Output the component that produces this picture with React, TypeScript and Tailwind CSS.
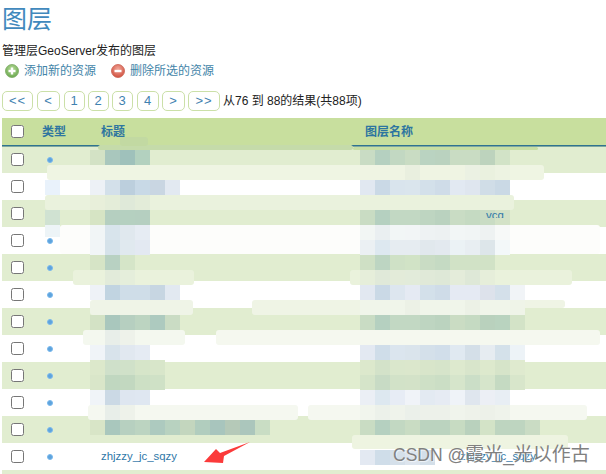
const rowCount = 13

type Mosaic = { x: number; y: number; colors: string[] }
type Band = { x: number; y: number; w: number; h: number; color: string }

const titleMosaic: Mosaic[] = [
  { x: 90, y: 150, colors: ['#d3e2c5', '#a9c7bd', '#9fc1bb', '#b3d1bf'] },
  { x: 90, y: 180, colors: ['#edf1f6', '#d3e0ea', '#bccfdd', '#c8d9e6', '#c9d6e2', '#e2e9f1'] },
  { x: 90, y: 195, colors: ['#e8efda', '#e4edd9', '#dfe9d9', '#e3ecd9'] },
  { x: 90, y: 210, colors: ['#d6e4c4', '#b5cfc0', '#b5d0c0', '#b5cfc0'] },
  { x: 90, y: 225, colors: ['#f1f5f6', '#d8e4ec', '#e0e8ee', '#e6ecf3'] },
  { x: 90, y: 240, colors: ['#f1f5f7', '#d5e2ea', '#e0e9ef', '#e3e9f2'] },
  { x: 90, y: 255, colors: ['#d6e4c6', '#b8d1c2', '#d5e5c8'] },
  { x: 105, y: 270, colors: ['#e2ebda', '#e5eedb'] },
  { x: 90, y: 285, colors: ['#eef2f7', '#c1d4e1', '#cfdde8', '#cfdde8', '#c7d6e2', '#e2e9f1'] },
  { x: 90, y: 315, colors: ['#d3e2c5', '#a9c7bd', '#b6cfc0', '#bcd4c1', '#adcabf', '#cadcc4'] },
  { x: 105, y: 330, colors: ['#e8eee9', '#eef2ea'] },
  { x: 90, y: 345, colors: ['#f0f4f8', '#d8e3eb', '#e1e8f0', '#e5ebf3'] },
  { x: 90, y: 360, colors: ['#dce8cb', '#cfe0ca', '#d0e1c9', '#d6e5c9', '#d8e6ca'] },
  { x: 90, y: 375, colors: ['#d9e6c9', '#c0d7c0', '#c2d8c0', '#cde0c5', '#cfe1c6'] },
  { x: 90, y: 390, colors: ['#f0f4f8', '#cbd9e5', '#dee6f0', '#dfe7f1'] },
  { x: 105, y: 405, colors: ['#e8eee9', '#eef2ea'] },
  {
    x: 90,
    y: 420,
    colors: ['#d8e5c7', '#a9c7bd', '#b7d0c0', '#bcd4c1', '#adcabf', '#b8d2c0', '#c3d6be', '#b1cdbe', '#a8c5bd', '#b5c9b8', '#abc6bc', '#c9ddc4'],
  },
  { x: 45, y: 180, colors: ['#e9f2fb'] },
  { x: 45, y: 210, colors: ['#d0e2d2'] },
]

const nameMosaic: Mosaic[] = [
  { x: 360, y: 150, colors: ['#c9dcc4', '#b5d0c0', '#c2d8c2', '#c9dcc3', '#bad3c1', '#bad2bf', '#c9dcc3', '#c9dcc3', '#bdd3bd', '#d2e3c7'] },
  { x: 360, y: 165, colors: ['#eff4e3', '#eff4e3', '#eff4e3', '#e9efdf', '#eff4e3', '#eff4e3', '#eff4e3', '#ebf1e3', '#eaf1df', '#edf3e2'] },
  { x: 360, y: 180, colors: ['#e1e8f1', '#cad9e6', '#d9e4ed', '#dae5ed', '#d3e0ea', '#cfdce8', '#e2e9f2', '#dfe6ef', '#d0dde7', '#cad9e5'] },
  { x: 360, y: 210, colors: ['#c9dcc3', '#b5d0c0', '#c2d8c3', '#c2d8c3', '#bed5c1', '#bad2bf', '#c9dcc4', '#c5dac2', '#c9dcc4', '#d3e2c7'] },
  { x: 360, y: 225, colors: ['#f2f6f4', '#eaeff1', '#f2f6f6', '#f2f5f6', '#eef2f3', '#edf1f2', '#f2f6f6', '#f1f5f5', '#eef2f2', '#f7f9f8'] },
  { x: 360, y: 240, colors: ['#ebf0f3', '#dde8f0', '#e6ecf1', '#e6ecf1', '#e1e8ed', '#e3e9ef', '#ebf2f5', '#e8eef2', '#dde6ea', '#f3f8f9'] },
  { x: 360, y: 255, colors: ['#cfe0c5', '#bdd5c2', '#cfe1c6', '#d1e3c6', '#c9dcc4', '#c5dac3', '#d1e2c6', '#d1e2c6', '#d1e2c6'] },
  { x: 360, y: 270, colors: ['#e6eeda', '#e0e9d9', '#e3ebd9', '#e2ebda', '#e0e9d8', '#dee8d7', '#e4ecda', '#dee8d7', '#e6eeda'] },
  { x: 360, y: 285, colors: ['#e2e8f1', '#cad9e6', '#dde6ef', '#e5eaf3', '#d3e0ea', '#cfdce8', '#e5eaf3', '#e5eaf3', '#dde2eb', '#d4e0ea', '#f1f4f7'] },
  { x: 360, y: 300, colors: ['#f0f5ea', '#f0f5ea', '#f0f5ea', '#ecf1e6', '#f0f5ea', '#f0f5ea', '#f0f5ea', '#ecf1e6', '#f0f5ea', '#f0f5ea', '#eff4e8'] },
  { x: 360, y: 315, colors: ['#c9dcc4', '#b5d0c0', '#c2d8c3', '#c2d8c3', '#bed5c1', '#bbd3bf', '#cadcc3', '#c5dac2', '#b9d1bd', '#b9d3bf', '#d3e3c7'] },
  { x: 360, y: 345, colors: ['#e3e9f2', '#cfdde9', '#dbe5ee', '#dae4ec', '#d4e0ea', '#d1deea', '#e0e9f1', '#d4dfe8', '#e6ecf1', '#d4e1ea', '#edf3f7'] },
  { x: 360, y: 360, colors: ['#dce8cc', '#d3e2c9', '#dae7cc', '#dbe7cc', '#d8e5ca', '#d6e4ca', '#dde9ce', '#d8e5cb', '#dde9cd', '#d6e4c9', '#dfeacf'] },
  { x: 360, y: 375, colors: ['#d5e4c9', '#c8dbc5', '#d2e2c8', '#d3e2c8', '#cee0c6', '#cbdec5', '#d6e5cb', '#cbdec7', '#d6e5cb', '#c5dac2', '#d8e6cb'] },
  { x: 360, y: 390, colors: ['#ebeff5', '#dde8f0', '#e7ecf5', '#f0f3f8', '#e3eaf2', '#e6ebf3', '#eff3f8', '#dfe6ee', '#eceff5', '#e8eef4'] },
  { x: 360, y: 405, colors: ['#f1f5ed', '#ecf1ea', '#eff3eb', '#ebf0ea', '#edf1ea', '#edf1ea', '#f0f4ec', '#eef2ea', '#edf1e9', '#eff3eb'] },
  { x: 360, y: 420, colors: ['#c9dcc3', '#b5d0c0', '#c2d8c2', '#c9dcc3', '#bbd3bf', '#bbd3bf', '#c7dbc2', '#b9d1bd', '#d3e3c7', '#bed5c0', '#bed5c0', '#cadcc4'] },
  { x: 360, y: 450, colors: ['#e3e9f2', '#cfdde9', '#d5e0ea', '#dde5ee', '#d3dfe9'] },
]

const bands: Band[] = [
  { x: 98, y: 145, w: 255, h: 5, color: '#c5dbaa' },
  { x: 353, y: 147, w: 185, h: 3, color: '#c7dea3' },
  { x: 120, y: 137, w: 28, h: 9, color: '#c2d9a2' },
  { x: 47, y: 165, w: 497, h: 15, color: '#eff5e3' },
  { x: 45, y: 195, w: 469, h: 15, color: '#eaf2dd' },
  { x: 60, y: 225, w: 540, h: 29, color: '#fdfdfb' },
  { x: 73, y: 270, w: 121, h: 15, color: '#eaf2dc' },
  { x: 350, y: 270, w: 222, h: 15, color: '#eaf2dc' },
  { x: 90, y: 300, w: 103, h: 15, color: '#eff4e7' },
  { x: 252, y: 300, w: 258, h: 15, color: '#eff4e5' },
  { x: 510, y: 300, w: 55, h: 8, color: '#eff4e5' },
  { x: 83, y: 330, w: 102, h: 15, color: '#f4f8ef' },
  { x: 216, y: 330, w: 384, h: 15, color: '#f5f8ef' },
  { x: 88, y: 405, w: 210, h: 15, color: '#f5f8f0' },
  { x: 308, y: 405, w: 279, h: 15, color: '#f5f8f0' },
  { x: 352, y: 435, w: 216, h: 14, color: '#eef4e1' },
]

function ActionIcon({ kind }: { kind: 'add' | 'remove' }) {
  const isAdd = kind === 'add'
  return (
    <svg width="14" height="14" viewBox="0 0 14 14" className="shrink-0">
      <defs>
        <radialGradient id={`${kind}-fill`} cx="50%" cy="35%" r="65%">
          <stop offset="0%" stopColor={isAdd ? '#b8dc9a' : '#f2a79a'} />
          <stop offset="100%" stopColor={isAdd ? '#6aa84f' : '#d0503f'} />
        </radialGradient>
      </defs>
      <circle cx="7" cy="7" r="6.5" fill={`url(#${kind}-fill)`} stroke={isAdd ? '#78a860' : '#c9604f'} strokeWidth="0.8" />
      <rect x="3.5" y="5.8" width="7" height="2.4" fill="#fff" />
      {isAdd ? <rect x="5.8" y="3.5" width="2.4" height="7" fill="#fff" /> : null}
    </svg>
  )
}

function PageButton({ label, width }: { label: string; width: string }) {
  return (
    <button className={`flex h-[20px] items-center justify-center rounded-[5px] border border-[#cbe0a8] bg-white text-[13px] tracking-[1px] text-[#3f82b0] ${width}`}>
      {label}
    </button>
  )
}

function MosaicRow({ row }: { row: Mosaic }) {
  return (
    <div className="absolute flex h-[15px]" style={{ left: row.x, top: row.y }}>
      {row.colors.map((color, index) => (
        <div key={index} className="h-[15px] w-[15px]" style={{ backgroundColor: color }} />
      ))}
    </div>
  )
}

function App() {
  return (
    <div className="relative h-[474px] w-[606px] overflow-hidden bg-white pl-[2px] font-['Liberation_Sans','Noto_Sans_CJK_SC',sans-serif] text-[12px] text-[#222]">
      <h1 className="h-[38px] text-[25px] leading-[38px] text-[#4189bd]">图层</h1>
      <p className="mt-[5px] h-[16px] leading-[16px]">管理层GeoServer发布的图层</p>

      <div className="mt-[3px] flex h-[18px] items-center pl-[3px] text-[#4284a8]">
        <ActionIcon kind="add" />
        <span className="ml-[5px]">添加新的资源</span>
        <span className="ml-[15px]">
          <ActionIcon kind="remove" />
        </span>
        <span className="ml-[5px]">删除所选的资源</span>
      </div>

      <div className="mt-[11px] flex h-[20px] items-center gap-[3px]">
        <PageButton label="<<" width="w-[31px]" />
        <PageButton label="<" width="w-[23px] ml-[1px]" />
        <PageButton label="1" width="w-[21px] ml-[1px]" />
        <PageButton label="2" width="w-[21px]" />
        <PageButton label="3" width="w-[21px]" />
        <PageButton label="4" width="w-[22px] ml-[1px]" />
        <PageButton label=">" width="w-[23px]" />
        <PageButton label=">>" width="w-[32px]" />
        <span>从76 到 88的结果(共88项)</span>
      </div>

      <div className="relative z-10 mt-[7px] flex h-[28px] items-center border-b border-[#2f7390] bg-[#c8df9e] font-bold text-[#2e75a0] shadow-[0_1px_0_#7fa8a0]">
        <div className="flex w-[40px] justify-center pr-[9px]">
          <input type="checkbox" className="h-[13px] w-[13px]" />
        </div>
        <div className="w-[59px]">类型</div>
        <div className="w-[264px]">标题</div>
        <div>图层名称</div>
      </div>

      {Array.from({ length: rowCount }, (_, index) => (
        <div key={index} className={`flex h-[27px] items-center ${index % 2 === 0 ? 'bg-[#e1edd0]' : 'bg-white'}`}>
          <div className="flex w-[40px] justify-center pr-[9px]">
            <input type="checkbox" className="h-[13px] w-[13px]" />
          </div>
          <div className="w-[59px] pl-[5px]">
            <div className="h-[6px] w-[6px] rounded-full border border-[#7ab9ee] bg-[#5ea3dc]" />
          </div>
          <div className="text-[11.4px] text-[#2f78a8]">{index === 11 ? 'zhjzzy_jc_sqzy' : ''}</div>
        </div>
      ))}

      {/* blur smudges laid over the table */}
      <div className="pointer-events-none absolute inset-0 z-20">
        {bands.map((band, index) => (
          <div
            key={index}
            className="absolute rounded-[3px]"
            style={{ left: band.x, top: band.y, width: band.w, height: band.h, backgroundColor: band.color }}
          />
        ))}
        {titleMosaic.map((row, index) => (
          <MosaicRow key={index} row={row} />
        ))}
        {nameMosaic.map((row, index) => (
          <MosaicRow key={index} row={row} />
        ))}
        <div className="absolute left-[45px] top-[225px] h-[12px] w-[15px] bg-[#edf4f7]" />
        <div className="absolute left-[486px] top-[211px] h-[7px] overflow-hidden text-[11.4px] leading-[8px] text-[#2f78a8]">vcg</div>
        <div className="absolute left-[460px] top-[449px] text-[11.4px] leading-[14px] text-[#2f78a8]">zhjzzy_jc_sqzy</div>

        <svg width="606" height="474" viewBox="0 0 606 474" className="absolute left-0 top-0">
          <polygon points="204,462 216,449 220,453 250,442 224,456 223,463" fill="#fb3a3a" />
        </svg>

        <div className="absolute left-[393px] top-[441px] whitespace-nowrap text-[19px] leading-[28px] text-[#808080] [text-shadow:1px_1px_1px_rgba(255,255,255,0.7)]">
          <span className="text-[17.5px]">CSDN @</span>霞光_光以作古
        </div>
      </div>
    </div>
  )
}

export default App
